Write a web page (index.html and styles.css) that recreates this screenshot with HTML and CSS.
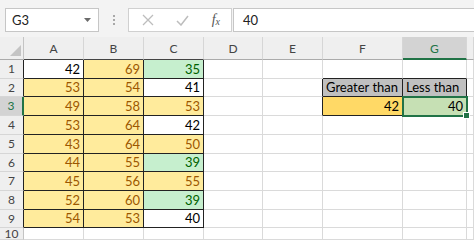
FILE: index.html
```html
<!DOCTYPE html>
<html lang="en">
<head>
  <meta charset="UTF-8" />
  <title>Sheet1</title>
  <link rel="stylesheet" href="styles.css">
</head>
<body>
  <div class="ribbon">
    <div class="namebox">
      <span>G3</span>
      <svg class="drop" width="7" height="4" viewBox="0 0 7 4"><path d="M0 0h7L3.5 4z" fill="#6b6b6b"/></svg>
    </div>
    <div class="grip"><i></i><i></i><i></i></div>
    <div class="fxgroup">
      <svg width="12" height="12" viewBox="0 0 12 12"><path d="M1 1l10 10M11 1L1 11" stroke="#bdbdbd" stroke-width="1.3" fill="none"/></svg>
      <svg width="13" height="11" viewBox="0 0 13 11"><path d="M1 6l4 4 7-9" stroke="#bdbdbd" stroke-width="1.5" fill="none"/></svg>
      <span class="fx">f<sub>x</sub></span>
    </div>
    <div class="formula">40</div>
  </div>

  <div class="sheet">
    <!-- header row -->
    <div class="c corner"><svg width="11" height="11" viewBox="0 0 11 11"><path d="M11 0v11H0z" fill="#c4c4c4"/></svg></div>
    <div class="c hd bb">A</div>
    <div class="c hd bb">B</div>
    <div class="c hd bb">C</div>
    <div class="c hd">D</div>
    <div class="c hd">E</div>
    <div class="c hd">F</div>
    <div class="c hd sel">G</div>
    <div class="c hd"></div>

    <!-- 1 -->
    <div class="c rh br">1</div>
    <div class="c bx">42</div>
    <div class="c bx y">69</div>
    <div class="c bx g">35</div>
    <div class="c"></div>
    <div class="c"></div>
    <div class="c bb"></div>
    <div class="c bb"></div>
    <div class="c"></div>

    <!-- 2 -->
    <div class="c rh br">2</div>
    <div class="c bx y">53</div>
    <div class="c bx y">54</div>
    <div class="c bx">41</div>
    <div class="c"></div>
    <div class="c br"></div>
    <div class="c bx head">Greater than</div>
    <div class="c bx head">Less than</div>
    <div class="c"></div>

    <!-- 3 -->
    <div class="c rh br rsel">3</div>
    <div class="c bx y">49</div>
    <div class="c bx y">58</div>
    <div class="c bx y">53</div>
    <div class="c"></div>
    <div class="c br"></div>
    <div class="c bx gold">42</div>
    <div class="c bx lime active">40</div>
    <div class="c"></div>

    <!-- 4 -->
    <div class="c rh br">4</div>
    <div class="c bx y">53</div>
    <div class="c bx y">64</div>
    <div class="c bx">42</div>
    <div class="c"></div>
    <div class="c"></div>
    <div class="c"></div>
    <div class="c"></div>
    <div class="c"></div>

    <!-- 5 -->
    <div class="c rh br">5</div>
    <div class="c bx y">43</div>
    <div class="c bx y">64</div>
    <div class="c bx y">50</div>
    <div class="c"></div>
    <div class="c"></div>
    <div class="c"></div>
    <div class="c"></div>
    <div class="c"></div>

    <!-- 6 -->
    <div class="c rh br">6</div>
    <div class="c bx y">44</div>
    <div class="c bx y">55</div>
    <div class="c bx g">39</div>
    <div class="c"></div>
    <div class="c"></div>
    <div class="c"></div>
    <div class="c"></div>
    <div class="c"></div>

    <!-- 7 -->
    <div class="c rh br">7</div>
    <div class="c bx y">45</div>
    <div class="c bx y">56</div>
    <div class="c bx y">55</div>
    <div class="c"></div>
    <div class="c"></div>
    <div class="c"></div>
    <div class="c"></div>
    <div class="c"></div>

    <!-- 8 -->
    <div class="c rh br">8</div>
    <div class="c bx y">52</div>
    <div class="c bx y">60</div>
    <div class="c bx g">39</div>
    <div class="c"></div>
    <div class="c"></div>
    <div class="c"></div>
    <div class="c"></div>
    <div class="c"></div>

    <!-- 9 -->
    <div class="c rh br">9</div>
    <div class="c bx y">54</div>
    <div class="c bx y">53</div>
    <div class="c bx">40</div>
    <div class="c"></div>
    <div class="c"></div>
    <div class="c"></div>
    <div class="c"></div>
    <div class="c"></div>

    <!-- 10 -->
    <div class="c rh">10</div>
    <div class="c"></div>
    <div class="c"></div>
    <div class="c"></div>
    <div class="c"></div>
    <div class="c"></div>
    <div class="c"></div>
    <div class="c"></div>
    <div class="c"></div>
  </div>
</body>
</html>
```

FILE: styles.css
```css
* {
  box-sizing: border-box;
}

body {
  margin: 0;
  width: 474px;
  height: 240px;
  overflow: hidden;
  background: #fff;
  font-family: Lato, 'Open Sans', sans-serif;
}

/* formula bar */
.ribbon {
  height: 37px;
  background: #f3f3f3;
  display: flex;
  align-items: flex-start;
  padding: 8px 0 0 5px;
}

.namebox {
  width: 94px;
  height: 24px;
  background: #fff;
  border: 1px solid #c6c6c6;
  display: flex;
  align-items: center;
  justify-content: space-between;
  padding: 0 7px 0 6px;
  font-size: 13px;
  color: #222;
}

.grip {
  width: 29px;
  height: 24px;
  display: flex;
  flex-direction: column;
  align-items: center;
  justify-content: center;
  gap: 2px;
}

.grip i {
  width: 2px;
  height: 2px;
  background: #a8a8a8;
}

.fxgroup {
  width: 104px;
  height: 24px;
  background: #fff;
  border: 1px solid #d0d0d0;
  display: flex;
  align-items: center;
  justify-content: space-between;
  padding: 0 11px 0 13px;
}

.fx {
  font-family: 'Liberation Serif', serif;
  font-style: italic;
  font-size: 14px;
  color: #555;
  line-height: 1;
}

.fx sub {
  font-size: 10px;
  vertical-align: -1px;
}

.formula {
  flex: 1;
  height: 24px;
  margin-left: 1px;
  background: #fff;
  border: 1px solid #c6c6c6;
  border-right: none;
  display: flex;
  align-items: center;
  padding-left: 9px;
  font-size: 13px;
  color: #222;
}

/* grid */
.sheet {
  display: grid;
  grid-template-columns: 24px 60px 60px 60px 59px 60px 80px 64px 7px;
  grid-template-rows: 23px 19px 18px 19px 19px 19px 18px 19px 19px 18px 12px;
}

.c {
  border-right: 1px solid #dadada;
  border-bottom: 1px solid #dadada;
  display: flex;
  align-items: flex-end;
  justify-content: flex-end;
  padding: 0 3px 2px;
  font-size: 13px;
  line-height: 1;
  color: #000;
  white-space: nowrap;
  overflow: hidden;
}

.corner {
  background: #efefef;
  border-bottom-color: #ababab;
  border-right-color: #c4c4c4;
  padding: 0 2px 3px 0;
}

.hd {
  background: #efefef;
  border-bottom-color: #ababab;
  border-right-color: #d6d6d6;
  justify-content: center;
  align-items: center;
  padding: 2px 0 0;
  font-size: 12px;
  color: #444;
}

.hd.sel {
  background: #d3d3d3;
  border-bottom: 2px solid #217346;
  padding-top: 3px;
  color: #217346;
}

.rh {
  background: #efefef;
  border-right-color: #c4c4c4;
  border-bottom-color: #d6d6d6;
  justify-content: center;
  align-items: center;
  padding: 0;
  font-size: 12px;
  color: #444;
}

.rh:last-of-type {
  align-items: flex-start;
  padding-top: 3px;
}

.rh.rsel {
  background: #d3d3d3;
  border-right: 2px solid #217346;
  color: #217346;
}

/* range borders */
.bx {
  border-right-color: #222;
  border-bottom-color: #222;
}

.br {
  border-right-color: #222;
}

.bb {
  border-bottom-color: #222;
}

.hd.bb {
  border-bottom-color: #444;
}

/* fills */
.y {
  background: #ffeb9c;
  color: #9c5700;
}

.g {
  background: #c6efce;
  color: #006100;
}

.head {
  background: #c0c0c0;
  justify-content: flex-start;
  padding-left: 3px;
}

.gold {
  background: #ffd966;
}

.lime {
  background: #c6e0b4;
}

.active {
  position: relative;
  overflow: visible;
  outline: 2px solid #217346;
  outline-offset: -1px;
}

.active::after {
  content: '';
  position: absolute;
  right: -4px;
  bottom: -4px;
  width: 5px;
  height: 5px;
  background: #217346;
  border: 1px solid #fff;
}
```
